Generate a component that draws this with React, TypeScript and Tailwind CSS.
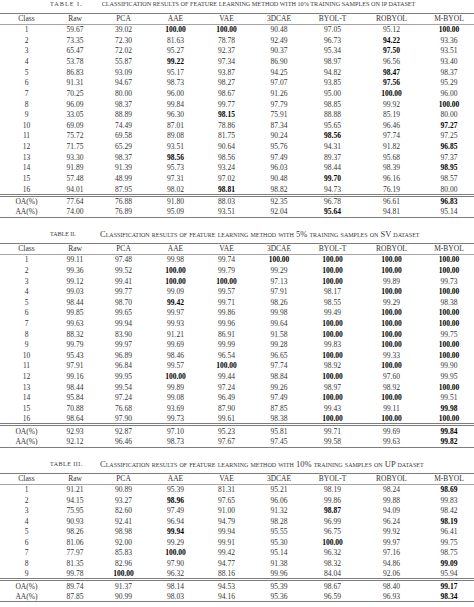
import type { ReactNode } from "react";

const GRID = "grid grid-cols-[53px_44px_53px_51px_51px_54px_53px_65px_50px] items-center";
const HEAD = ["Class", "Raw", "PCA", "AAE", "VAE", "3DCAE", "BYOL-T", "ROBYOL", "M-BYOL"];

// "*" in front of a value = best result, printed bold
const ipRows = [
  ["59.67", "39.02", "*100.00", "*100.00", "90.48", "97.05", "95.12", "*100.00"],
  ["73.35", "72.30", "81.63", "78.78", "92.49", "96.73", "*94.22", "93.36"],
  ["65.47", "72.02", "95.27", "92.37", "90.37", "95.34", "*97.50", "93.51"],
  ["53.78", "55.87", "*99.22", "97.34", "86.90", "98.97", "96.56", "93.40"],
  ["86.83", "93.09", "95.17", "93.87", "94.25", "94.82", "*98.47", "98.37"],
  ["91.31", "94.67", "98.73", "98.27", "97.07", "93.85", "*97.56", "95.29"],
  ["70.25", "80.00", "96.00", "98.67", "91.26", "95.00", "*100.00", "96.00"],
  ["96.09", "98.37", "99.84", "99.77", "97.79", "98.85", "99.92", "*100.00"],
  ["33.05", "88.89", "96.30", "*98.15", "75.91", "88.88", "85.19", "80.00"],
  ["69.09", "74.49", "87.01", "78.86", "87.34", "95.65", "96.46", "*97.27"],
  ["75.72", "69.58", "89.08", "81.75", "90.24", "*98.56", "97.74", "97.25"],
  ["71.75", "65.29", "93.51", "90.64", "95.76", "94.31", "91.82", "*96.85"],
  ["93.30", "98.37", "*98.56", "98.56", "97.49", "89.37", "95.68", "97.37"],
  ["91.89", "91.39", "95.73", "93.24", "96.03", "98.44", "98.39", "*98.95"],
  ["57.48", "48.99", "97.31", "97.02", "90.48", "*99.70", "96.16", "98.57"],
  ["94.01", "87.95", "98.02", "*98.81", "98.82", "94.73", "76.19", "80.00"],
];
const ipOA = ["77.64", "76.88", "91.80", "88.03", "92.35", "96.78", "96.61", "*96.83"];
const ipAA = ["74.00", "76.89", "95.09", "93.51", "92.04", "*95.64", "94.81", "95.14"];

const svRows = [
  ["99.11", "97.48", "99.98", "99.74", "*100.00", "*100.00", "*100.00", "*100.00"],
  ["99.36", "99.52", "*100.00", "99.79", "99.29", "*100.00", "*100.00", "*100.00"],
  ["99.12", "99.41", "*100.00", "*100.00", "97.13", "*100.00", "99.89", "99.73"],
  ["99.03", "99.77", "99.09", "99.57", "97.91", "98.17", "*100.00", "*100.00"],
  ["98.44", "98.70", "*99.42", "99.71", "98.26", "98.55", "99.29", "98.38"],
  ["99.85", "99.65", "99.97", "99.86", "99.98", "99.49", "*100.00", "*100.00"],
  ["99.63", "99.94", "99.93", "99.96", "99.64", "*100.00", "*100.00", "*100.00"],
  ["88.32", "83.90", "91.21", "86.91", "91.58", "*100.00", "*100.00", "99.75"],
  ["99.79", "99.97", "99.69", "99.99", "99.28", "99.83", "*100.00", "*100.00"],
  ["95.43", "96.89", "98.46", "96.54", "96.65", "*100.00", "99.33", "*100.00"],
  ["97.91", "96.84", "99.57", "*100.00", "97.74", "98.92", "*100.00", "99.90"],
  ["99.16", "99.95", "*100.00", "99.44", "98.84", "*100.00", "97.60", "99.95"],
  ["98.44", "99.54", "99.89", "97.24", "99.26", "98.97", "98.92", "*100.00"],
  ["95.84", "97.24", "99.08", "96.49", "97.49", "*100.00", "*100.00", "99.51"],
  ["70.88", "76.68", "93.69", "87.90", "87.85", "99.43", "99.11", "*99.98"],
  ["98.64", "97.90", "99.73", "99.61", "98.38", "*100.00", "*100.00", "*100.00"],
];
const svOA = ["92.93", "92.87", "97.10", "95.23", "95.81", "99.71", "99.69", "*99.84"];
const svAA = ["92.12", "96.46", "98.73", "97.67", "97.45", "99.58", "99.63", "*99.82"];

const upRows = [
  ["91.21", "90.89", "95.39", "81.31", "95.21", "98.19", "98.24", "*98.69"],
  ["94.15", "93.27", "*98.96", "97.65", "96.06", "99.86", "99.88", "99.83"],
  ["75.95", "82.60", "97.49", "91.00", "91.32", "*98.87", "94.09", "98.42"],
  ["90.93", "92.41", "96.94", "94.79", "98.28", "96.99", "96.24", "*98.19"],
  ["98.26", "98.98", "*99.94", "99.94", "95.55", "96.75", "99.92", "96.41"],
  ["81.06", "92.00", "99.29", "99.91", "95.30", "*100.00", "99.97", "99.75"],
  ["77.97", "85.83", "*100.00", "99.42", "95.14", "96.32", "97.16", "98.75"],
  ["81.35", "82.96", "97.90", "94.77", "91.38", "98.32", "94.86", "*99.09"],
  ["99.78", "*100.00", "96.32", "88.16", "99.96", "84.04", "92.06", "95.94"],
];
const upOA = ["89.74", "91.37", "98.14", "94.53", "95.39", "98.67", "98.40", "*99.17"];
const upAA = ["87.85", "90.99", "98.03", "94.16", "95.36", "96.59", "96.93", "*98.34"];

function Cells({ cells }: { cells: string[] }) {
  return (
    <>
      {cells.map((c, i) => {
        const bold = c.startsWith("*");
        return (
          <div key={i} className={bold ? "text-center font-bold text-black" : "text-center"}>
            {bold ? c.slice(1) : c}
          </div>
        );
      })}
    </>
  );
}

function Table({
  title,
  rows,
  oa,
  aa,
  rowH,
  first,
}: {
  title: ReactNode;
  rows: string[][];
  oa: string[];
  aa: string[];
  rowH: string;
  first?: boolean;
}) {
  return (
    <section className={first ? "" : "mt-[12.5px]"}>
      <div className="h-[8px] flex items-center pl-[50px] whitespace-nowrap text-[#3a3a3a]">{title}</div>
      <div className="mt-[4.5px] border-t border-[#7d7d7d]">
        <div className={`${GRID} h-[11px] border-b border-[#a5a5a5]`}>
          <Cells cells={HEAD} />
        </div>
        {rows.map((r, i) => (
          <div key={i} className={`${GRID} ${rowH}`}>
            <Cells cells={[String(i + 1), ...r]} />
          </div>
        ))}
        <div className="-mt-px h-[3px] border-y border-[#7d7d7d]" />
        <div className={`${GRID} h-[10.6px]`}>
          <Cells cells={["OA(%)", ...oa]} />
        </div>
        <div className={`${GRID} h-[10.6px] border-b border-[#7d7d7d]`}>
          <Cells cells={["AA(%)", ...aa]} />
        </div>
      </div>
    </section>
  );
}

export default function App() {
  return (
    <div className="w-[474px] h-[607px] overflow-hidden bg-white font-['Liberation_Serif',serif] text-[7.5px] leading-none text-[#333]">
      <Table
        first
        rowH="h-[10.65px]"
        rows={ipRows}
        oa={ipOA}
        aa={ipAA}
        title={
          <>
            <span className="w-[51.7px] shrink-0 text-[6.2px] tracking-[1px]">TABLE I.</span>
            <span className="text-[6.2px]">
              CLASSIFICATION RESULTS OF FEATURE LEARNING METHOD WITH 10% TRAINING SAMPLES ON IP DATASET
            </span>
          </>
        }
      />
      <Table
        rowH="h-[10.6px]"
        rows={svRows}
        oa={svOA}
        aa={svAA}
        title={
          <>
            <span className="w-[50px] shrink-0 text-[6px]">TABLE II.</span>
            <span className="text-[8.5px] [font-variant:small-caps]">
              Classification results of feature learning method with 5% training samples on SV dataset
            </span>
          </>
        }
      />
      <Table
        rowH="h-[10.5px]"
        rows={upRows}
        oa={upOA}
        aa={upAA}
        title={
          <>
            <span className="w-[50px] shrink-0 text-[6px] tracking-[0.5px]">TABLE III.</span>
            <span className="text-[8.5px] [font-variant:small-caps]">
              Classification results of feature learning method with 10% training samples on UP dataset
            </span>
          </>
        }
      />
    </div>
  );
}
